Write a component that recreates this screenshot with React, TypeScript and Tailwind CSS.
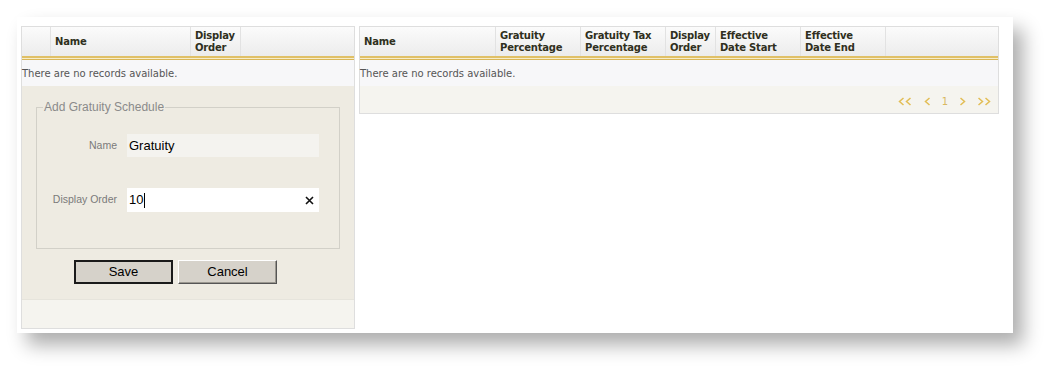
import React from "react";

const headFont = { fontFamily: '"DejaVu Sans", Verdana, sans-serif' };
const arial = { fontFamily: '"Liberation Sans", Arial, sans-serif' };

function GoldBand() {
  return (
    <div className="h-[4px] border-t-2 border-b border-t-[#e0c066] border-b-[#d9b656] bg-[#f7edc9]" />
  );
}

function HeaderCell({ w, lines, grow }: { w?: number; lines: string[]; grow?: boolean }) {
  return (
    <div
      className={`flex h-full flex-col justify-center border-r border-r-[#e2e2e2] pl-[4px] text-[10px] font-bold leading-[12px] text-[#2f2f20] ${grow ? "flex-1 border-r-0" : ""}`}
      style={w ? { width: w, ...headFont } : headFont}
    >
      {lines.map((l) => (
        <span key={l} className="whitespace-nowrap tracking-[-0.2px]">
          {l}
        </span>
      ))}
    </div>
  );
}

function Header({ cols }: { cols: { w?: number; lines: string[] }[] }) {
  return (
    <div>
      <div className="flex h-[29px] bg-gradient-to-b from-[#fbfbfb] to-[#ececec]">
        {cols.map((c, i) => (
          <HeaderCell key={i} w={c.w} lines={c.lines} grow={!c.w} />
        ))}
      </div>
      <GoldBand />
    </div>
  );
}

function NoRecords() {
  return (
    <div
      className="flex h-[26px] items-center bg-[#f7f7f9] text-[10px] text-[#555]"
      style={headFont}
    >
      There are no records available.
    </div>
  );
}

function Chev({ dir, double }: { dir: "l" | "r"; double?: boolean }) {
  const one = (x: number) =>
    dir === "l" ? `M${x + 4} 1 L${x} 4.5 L${x + 4} 8` : `M${x} 1 L${x + 4} 4.5 L${x} 8`;
  return (
    <svg width={double ? 15 : 7} height="9" viewBox={`0 0 ${double ? 15 : 7} 9`}>
      <path d={one(1.5)} fill="none" stroke="#e2bd55" strokeWidth="1.5" />
      {double && <path d={one(8.5)} fill="none" stroke="#e2bd55" strokeWidth="1.5" />}
    </svg>
  );
}

export default function App() {
  return (
    <div className="min-h-[381px] w-[1061px] bg-white p-[17px]">
      <div className="flex h-[316px] w-[996px] gap-[4px] bg-white pl-[4px] pt-[9px] shadow-[10px_12px_18px_rgba(0,0,0,0.32)]">
        {/* left panel */}
        <div className="flex h-[303px] w-[334px] flex-col border border-[#dedede]">
          <Header
            cols={[
              { w: 29, lines: [""] },
              { w: 140, lines: ["Name"] },
              { w: 50, lines: ["Display", "Order"] },
              { lines: [""] },
            ]}
          />
          <NoRecords />
          <div className="flex flex-1 flex-col bg-[#eeebe2] pt-[12px]">
            <fieldset className="mx-[14px] h-[151px] border border-[#d2d0c8] pl-[6px]">
              <legend className="px-[1px] text-[12px] text-[#8a8a8a]" style={arial}>
                Add Gratuity Schedule
              </legend>
              <div className="ml-[-6px] mt-[18px] flex items-center">
                <span className="w-[90px] pr-[10px] text-right text-[10.5px] text-[#7a7a7a]" style={arial}>
                  Name
                </span>
                <div className="flex h-[23px] w-[192px] items-center bg-[#f4f3ef] pl-[2px] text-[13px] text-black" style={arial}>
                  Gratuity
                </div>
              </div>
              <div className="ml-[-6px] mt-[31px] flex items-center">
                <span className="w-[90px] pr-[10px] text-right text-[10.5px] text-[#7a7a7a]" style={arial}>
                  Display Order
                </span>
                <div className="flex h-[24px] w-[192px] items-center bg-white pl-[2px] text-[13px] text-black" style={arial}>
                  10
                  <span className="ml-[1px] h-[15px] w-[1px] bg-black" />
                  <svg className="ml-auto mr-[5px]" width="9" height="9" viewBox="0 0 9 9">
                    <path d="M1 1 L8 8 M8 1 L1 8" stroke="#111" strokeWidth="1.6" />
                  </svg>
                </div>
              </div>
            </fieldset>
            <div className="mt-[11px] flex gap-[5px] pl-[52px]">
              <button
                className="h-[24px] w-[99px] border-2 border-[#1a1a1a] bg-[#d6d2ca] text-[13px] text-black"
                style={arial}
              >
                Save
              </button>
              <button
                className="h-[24px] w-[99px] border border-t-white border-l-white border-r-[#555] border-b-[#555] bg-[#d6d2ca] text-[13px] text-black shadow-[inset_-1px_-1px_0_#9a978f]"
                style={arial}
              >
                Cancel
              </button>
            </div>
          </div>
          <div className="h-[29px] border-t border-[#e6e4dc] bg-[#f5f4ef]" />
        </div>

        {/* right panel */}
        <div className="flex h-[88px] w-[640px] flex-col border border-[#dedede]">
          <Header
            cols={[
              { w: 136, lines: ["Name"] },
              { w: 85, lines: ["Gratuity", "Percentage"] },
              { w: 85, lines: ["Gratuity Tax", "Percentage"] },
              { w: 50, lines: ["Display", "Order"] },
              { w: 85, lines: ["Effective", "Date Start"] },
              { w: 85, lines: ["Effective", "Date End"] },
              { lines: [""] },
            ]}
          />
          <NoRecords />
          <div className="flex flex-1 items-center justify-end gap-[11px] bg-[#f5f4ef] pr-[6px] pt-[3px]">
            <Chev dir="l" double />
            <Chev dir="l" />
            <span className="text-[10px] text-[#d9b860]" style={headFont}>
              1
            </span>
            <Chev dir="r" />
            <Chev dir="r" double />
          </div>
        </div>
      </div>
    </div>
  );
}
